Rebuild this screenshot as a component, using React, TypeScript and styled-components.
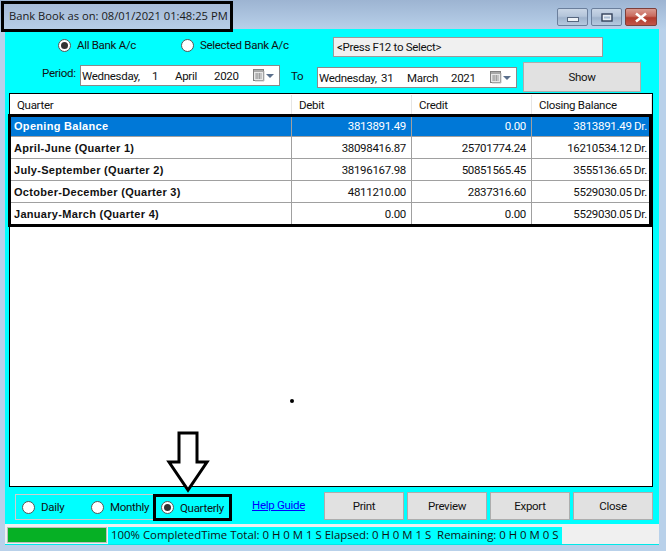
import React from 'react';
import styled, { createGlobalStyle } from 'styled-components';

const uiFont = 'Roboto, "Liberation Sans", Arial, sans-serif';
const captionFont = '"Open Sans", "Liberation Sans", Arial, sans-serif';

const GlobalStyle = createGlobalStyle`
  html, body { margin: 0; padding: 0; background: #b9d1ea; }
  body { font-family: ${uiFont}; font-size: 11.5px; letter-spacing: -0.3px; color: #111; }
`;

const Window = styled.div`
  position: relative;
  width: 666px;
  height: 551px;
  box-sizing: border-box;
  display: flex;
  flex-direction: column;
  background: linear-gradient(180deg, #9db4d2 0, #b9d1ea 30px);
  overflow: hidden;
`;

const TitleBar = styled.div`
  height: 29px;
  flex: none;
  display: flex;
  justify-content: space-between;
  padding: 1px 9px 0 1px;
  box-sizing: border-box;
`;

const TitleBox = styled.div`
  position: relative;
  z-index: 2;
  width: 232px;
  height: 31px;
  box-sizing: border-box;
  border: 3px solid #000;
  padding: 0 0 2px 5px;
  display: flex;
  align-items: center;
  background: linear-gradient(180deg, #a6bbd7, #b6cde7);
  font-family: ${captionFont};
  font-size: 11.2px;
  letter-spacing: 0;
  color: #1a1a1a;
  white-space: nowrap;
`;

const Controls = styled.div`
  display: flex;
  gap: 3px;
  margin-top: 7px;
`;

const ControlButton = styled.div<{ $close?: boolean; $w: number; $low?: boolean }>`
  width: ${(p) => p.$w}px;
  height: 18px;
  box-sizing: border-box;
  border: 1px solid ${(p) => (p.$close ? '#7d3f3a' : '#6b7f9c')};
  border-radius: 2px;
  display: flex;
  align-items: ${(p) => (p.$low ? 'flex-end' : 'center')};
  padding-bottom: ${(p) => (p.$low ? 3 : 0)}px;
  justify-content: center;
  background: ${(p) =>
    p.$close
      ? 'linear-gradient(180deg, #d99a90 0, #c96a5e 45%, #b23a2c 55%, #c2554a 100%)'
      : 'linear-gradient(180deg, #c9d6e6 0, #b4c5da 45%, #9fb3cc 55%, #b5c9df 100%)'};
`;

const Client = styled.div`
  flex: 1;
  margin: 0 7px 6px 5px;
  background: #00ffff;
  display: flex;
  flex-direction: column;
`;

const TopRow = styled.div`
  display: flex;
  align-items: center;
  height: 20px;
  margin-top: 8px;
  padding-left: 53px;
`;

const RadioLabel = styled.label<{ $w?: number; $raise?: boolean }>`
  display: flex;
  align-items: center;
  gap: 6px;
  width: ${(p) => (p.$w ? `${p.$w}px` : 'auto')};
  padding-bottom: ${(p) => (p.$raise ? 4 : 0)}px;
  color: #111;
  white-space: nowrap;
`;

const RadioCircle = styled.span<{ $on?: boolean }>`
  width: 13px;
  height: 13px;
  flex: none;
  box-sizing: border-box;
  border-radius: 50%;
  border: 1px solid #555;
  background: #fff;
  display: flex;
  align-items: center;
  justify-content: center;
  &::after {
    content: '';
    width: 7px;
    height: 7px;
    border-radius: 50%;
    background: ${(p) => (p.$on ? '#333' : 'transparent')};
  }
`;

const SelectField = styled.div`
  width: 270px;
  height: 20px;
  box-sizing: border-box;
  border: 1px solid #9a9a9a;
  background: #f0f0f0;
  padding-left: 3px;
  display: flex;
  align-items: center;
`;

const PeriodRow = styled.div`
  display: flex;
  align-items: flex-start;
  height: 31px;
  margin-top: 5px;
`;

const PeriodLabel = styled.span<{ $w: number; $pl: number; $top: number }>`
  width: ${(p) => p.$w}px;
  padding-left: ${(p) => p.$pl}px;
  margin-top: ${(p) => p.$top}px;
  box-sizing: border-box;
  flex: none;
`;

const DateBox = styled.div<{ $top: number }>`
  width: 200px;
  height: 21px;
  margin-top: ${(p) => p.$top}px;
  box-sizing: border-box;
  border: 1px solid #8a8a8a;
  background: #fff;
  display: flex;
  align-items: center;
  padding: 0 5px 0 1px;
  flex: none;
`;

const DatePart = styled.span<{ $w: number }>`
  width: ${(p) => p.$w}px;
  flex: none;
  white-space: nowrap;
`;

const CalendarSvg = styled.svg`
  flex: none;
`;

const ActionButton = styled.button<{ $w: number; $h: number; $ml?: number }>`
  width: ${(p) => p.$w}px;
  height: ${(p) => p.$h}px;
  margin-left: ${(p) => p.$ml ?? 0}px;
  flex: none;
  padding: 0;
  box-sizing: border-box;
  border: 1px solid #adadad;
  background: #e1e1e1;
  font-family: ${uiFont};
  font-size: 11.5px;
  letter-spacing: -0.3px;
  color: #111;
`;

const Grid = styled.div`
  position: relative;
  height: 394px;
  margin-left: 4px;
  width: 644px;
  box-sizing: border-box;
  border: 1px solid #000;
  background: #fff;
  padding: 1px 0 0 0;
  flex: none;
`;

const GridRow = styled.div<{ $head?: boolean; $sel?: boolean }>`
  display: grid;
  grid-template-columns: 282px 120px 120px 1fr;
  height: ${(p) => (p.$head ? 20 : 22)}px;
  box-sizing: border-box;
  background: ${(p) => (p.$sel ? '#0078d7' : '#fff')};
  color: ${(p) => (p.$sel ? '#fff' : '#111')};
  border-bottom: ${(p) => (p.$head ? 'none' : '1px solid #a0a0a0')};
`;

const HeadCell = styled.div`
  display: flex;
  align-items: center;
  padding-left: 7px;
  border-right: 1px solid #e5e5e5;
`;

const NameCell = styled.div`
  display: flex;
  align-items: center;
  padding-left: 4px;
  border-right: 1px solid #a0a0a0;
  font-family: "Liberation Sans", Arial, sans-serif;
  font-size: 11px;
  font-weight: bold;
  letter-spacing: 0.3px;
`;

const NumCell = styled.div`
  display: flex;
  align-items: center;
  justify-content: flex-end;
  padding-right: 5px;
  border-right: 1px solid #a0a0a0;
  &:last-child { border-right: none; }
`;

const RowsHighlight = styled.div`
  position: absolute;
  left: -2px;
  top: 20px;
  width: 644px;
  height: 113px;
  box-sizing: border-box;
  border: 3px solid #000;
  pointer-events: none;
`;

const Dot = styled.span`
  position: absolute;
  left: 280px;
  top: 305px;
  width: 4px;
  height: 4px;
  border-radius: 50%;
  background: #000;
`;

const BottomRow = styled.div`
  display: flex;
  align-items: flex-start;
  height: 32px;
  margin-top: 5px;
`;

const PeriodGroup = styled.div`
  display: flex;
  margin-left: 10px;
  margin-top: 2px;
  width: 138px;
  height: 26px;
  box-sizing: border-box;
  border: 1px solid #cfcfcf;
  border-right: none;
  align-items: center;
  padding-left: 6px;
`;

const QuarterBox = styled.div`
  width: 79px;
  height: 27px;
  margin-top: 2px;
  box-sizing: border-box;
  border: 3px solid #000;
  display: flex;
  align-items: center;
  padding-left: 5px;
  flex: none;
`;

const HelpLink = styled.a`
  width: 72px;
  margin-left: 20px;
  margin-top: 6px;
  flex: none;
  color: #0000ff;
  text-decoration: underline;
`;

const ButtonGroup = styled.div`
  display: flex;
  gap: 3px;
`;

const StatusBar = styled.div`
  height: 21px;
  flex: none;
  box-sizing: border-box;
  background: #f0f0f0;
  border-bottom: 1px solid #00e8e8;
  padding: 3px 0 0 2px;
  display: flex;
  align-items: flex-start;
  gap: 1px;
`;

const ProgressTrack = styled.div`
  width: 100px;
  height: 16px;
  box-sizing: border-box;
  border: 1px solid #bcbcbc;
  background: #06b025;
`;

const StatusText = styled.div`
  width: 454px;
  height: 17px;
  background: #00ffff;
  padding-left: 3px;
  box-sizing: border-box;
  font-family: ${captionFont};
  font-size: 11.4px;
  letter-spacing: 0;
  line-height: 16px;
  white-space: pre;
  color: #111;
`;

const ArrowMark = styled.svg`
  position: absolute;
  left: 166px;
  top: 430px;
  width: 44px;
  height: 64px;
`;

const rows = [
  ['Opening Balance', '3813891.49', '0.00', '3813891.49 Dr.'],
  ['April-June (Quarter 1)', '38098416.87', '25701774.24', '16210534.12 Dr.'],
  ['July-September (Quarter 2)', '38196167.98', '50851565.45', '3555136.65 Dr.'],
  ['October-December (Quarter 3)', '4811210.00', '2837316.60', '5529030.05 Dr.'],
  ['January-March (Quarter 4)', '0.00', '0.00', '5529030.05 Dr.'],
];

const CalendarIcon = () => (
  <CalendarSvg width="22" height="15" viewBox="0 0 22 15">
    <rect x="0.5" y="1.5" width="10" height="11" fill="#e8e8e8" stroke="#808080" />
    <rect x="1" y="2" width="9" height="2" fill="#a8a8a8" />
    <path d="M2 6h7M2 8h7M2 10h7M4 5v6M6.5 5v6" stroke="#a0a0a0" strokeWidth="1" />
    <path d="M11 3v10H2" stroke="#c4c4c4" fill="none" />
    <path d="M13 6h8l-4 4z" fill="#5a6f8c" />
  </CalendarSvg>
);

const DatePicker = ({ top, parts }: { top: number; parts: [string, number][] }) => (
  <DateBox $top={top}>
    {parts.map(([text, w]) => (
      <DatePart key={text} $w={w}>
        {text}
      </DatePart>
    ))}
    <CalendarIcon />
  </DateBox>
);

export default function App() {
  return (
    <Window>
      <GlobalStyle />
      <TitleBar>
        <TitleBox>Bank Book as on: 08/01/2021 01:48:25 PM</TitleBox>
        <Controls>
          <ControlButton $w={31} $low>
            <svg width="12" height="5" viewBox="0 0 12 5">
              <rect x="0.5" y="0.5" width="11" height="4" fill="#eef2f7" stroke="#56667e" />
            </svg>
          </ControlButton>
          <ControlButton $w={31}>
            <svg width="12" height="9" viewBox="0 0 12 9">
              <rect x="1" y="1" width="10" height="7" fill="#e8eef5" stroke="#33415a" strokeWidth="1.4" />
              <rect x="3" y="3.5" width="6" height="2" fill="#a9bcd3" />
            </svg>
          </ControlButton>
          <ControlButton $w={32} $close>
            <svg width="14" height="11" viewBox="0 0 14 11">
              <path d="M2 1.5l10 8M12 1.5l-10 8" stroke="#fff" strokeWidth="2.6" />
            </svg>
          </ControlButton>
        </Controls>
      </TitleBar>
      <Client>
        <TopRow>
          <RadioLabel $w={123} $raise>
            <RadioCircle $on />
            All Bank A/c
          </RadioLabel>
          <RadioLabel $w={152} $raise>
            <RadioCircle />
            Selected Bank A/c
          </RadioLabel>
          <SelectField>&lt;Press F12 to Select&gt;</SelectField>
        </TopRow>
        <PeriodRow>
          <PeriodLabel $w={75} $pl={37} $top={4}>
            Period:
          </PeriodLabel>
          <DatePicker
            top={3}
            parts={[
              ['Wednesday,', 70],
              ['1', 23],
              ['April', 39],
              ['2020', 39],
            ]}
          />
          <PeriodLabel $w={37} $pl={11} $top={7}>
            To
          </PeriodLabel>
          <DatePicker
            top={5}
            parts={[
              ['Wednesday,', 62],
              ['31', 26],
              ['March', 44],
              ['2021', 39],
            ]}
          />
          <ActionButton $w={118} $h={30} $ml={6}>
            Show
          </ActionButton>
        </PeriodRow>
        <Grid>
          <GridRow $head>
            <HeadCell>Quarter</HeadCell>
            <HeadCell>Debit</HeadCell>
            <HeadCell>Credit</HeadCell>
            <HeadCell>Closing Balance</HeadCell>
          </GridRow>
          {rows.map((r, i) => (
            <GridRow key={r[0]} $sel={i === 0}>
              <NameCell>{r[0]}</NameCell>
              <NumCell>{r[1]}</NumCell>
              <NumCell>{r[2]}</NumCell>
              <NumCell>{r[3]}</NumCell>
            </GridRow>
          ))}
          <RowsHighlight />
          <Dot />
        </Grid>
        <BottomRow>
          <PeriodGroup>
            <RadioLabel $w={69}>
              <RadioCircle />
              Daily
            </RadioLabel>
            <RadioLabel>
              <RadioCircle />
              Monthly
            </RadioLabel>
          </PeriodGroup>
          <QuarterBox>
            <RadioLabel>
              <RadioCircle $on />
              Quarterly
            </RadioLabel>
          </QuarterBox>
          <HelpLink>Help Guide</HelpLink>
          <ButtonGroup>
            <ActionButton $w={80} $h={28}>Print</ActionButton>
            <ActionButton $w={80} $h={28}>Preview</ActionButton>
            <ActionButton $w={80} $h={28}>Export</ActionButton>
            <ActionButton $w={80} $h={28}>Close</ActionButton>
          </ButtonGroup>
        </BottomRow>
        <StatusBar>
          <ProgressTrack />
          <StatusText>100% CompletedTime Total: 0 H 0 M 1 S Elapsed: 0 H 0 M 1 S  Remaining: 0 H 0 M 0 S</StatusText>
        </StatusBar>
      </Client>
      <ArrowMark viewBox="0 0 44 64">
        <path d="M13 3H31V32H41L22 60L3 32H13Z" fill="#fff" stroke="#000" strokeWidth="3" strokeLinejoin="miter" />
      </ArrowMark>
    </Window>
  );
}
